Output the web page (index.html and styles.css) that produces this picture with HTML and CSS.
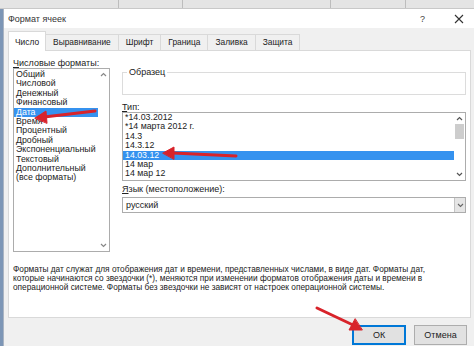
FILE: index.html
```html
<!DOCTYPE html>
<html>
<head>
	<meta charset="utf-8">
	<title>Формат ячеек</title>
	<link rel="stylesheet" href="styles.css">
</head>
<body>
	<div class="ribbon">
		<span class="rib-sep s1"></span>
		<span class="rib-sep s2"></span>
		<span class="rib-sep s3"></span>
		<span class="rib-sep s4"></span>
	</div>
	<div class="page">
		<div class="edge"></div>
		<div class="dialog">
			<div class="titlebar">
				<span class="title">Формат ячеек</span>
				<span class="help">?</span>
				<svg class="close" width="10" height="10" viewBox="0 0 10 10"><path d="M1 1L9 9M9 1L1 9" stroke="#333" stroke-width="1.1"/></svg>
			</div>
			<div class="dlg-body">
				<div class="tabs">
					<div class="tab active">Число</div>
					<div class="tab">Выравнивание</div>
					<div class="tab">Шрифт</div>
					<div class="tab">Граница</div>
					<div class="tab">Заливка</div>
					<div class="tab">Защита</div>
				</div>
				<div class="panel">
					<div class="columns">
						<div class="left-col">
							<div class="label"><u>Ч</u>исловые форматы:</div>
							<div class="listbox formats">
								<div class="items">
									<div>Общий</div>
									<div>Числовой</div>
									<div>Денежный</div>
									<div>Финансовый</div>
									<div class="sel">Дата</div>
									<div>Время</div>
									<div>Процентный</div>
									<div>Дробный</div>
									<div>Экспоненциальный</div>
									<div>Текстовый</div>
									<div>Дополнительный</div>
									<div>(все форматы)</div>
								</div>
								<div class="scroll">
									<svg class="arr" width="7" height="5" viewBox="0 0 7 5"><path d="M1 4L3.5 1.5L6 4" fill="none" stroke="#888" stroke-width="1.2"/></svg>
									<svg class="arr" width="7" height="5" viewBox="0 0 7 5"><path d="M1 1L3.5 3.5L6 1" fill="none" stroke="#888" stroke-width="1.2"/></svg>
								</div>
							</div>
						</div>
						<div class="right-col">
							<fieldset class="sample">
								<legend>Образец</legend>
							</fieldset>
							<div class="label"><u>Т</u>ип:</div>
							<div class="listbox types">
								<div class="items">
									<div>*14.03.2012</div>
									<div>*14 марта 2012 г.</div>
									<div>14.3</div>
									<div>14.3.12</div>
									<div class="sel">14.03.12</div>
									<div>14 мар</div>
									<div>14 мар 12</div>
								</div>
								<div class="scroll">
									<svg class="arr" width="7" height="5" viewBox="0 0 7 5"><path d="M1 4L3.5 1.5L6 4" fill="none" stroke="#555" stroke-width="1.2"/></svg>
									<span class="thumb"></span>
									<svg class="arr" width="7" height="5" viewBox="0 0 7 5"><path d="M1 1L3.5 3.5L6 1" fill="none" stroke="#555" stroke-width="1.2"/></svg>
								</div>
							</div>
							<div class="label lang"><u>Я</u>зык (местоположение):</div>
							<div class="combo">
								<span>русский</span>
								<span class="drop"><svg width="7" height="5" viewBox="0 0 7 5"><path d="M1 1L3.5 3.5L6 1" fill="none" stroke="#666" stroke-width="1.1"/></svg></span>
							</div>
						</div>
					</div>
					<p class="desc">Форматы дат служат для отображения дат и времени, представленных числами, в виде дат. Форматы дат,<br>которые начинаются со звездочки (*), меняются при изменении форматов отображения даты и времени в<br>операционной системе. Форматы без звездочки не зависят от настроек операционной системы.</p>
				</div>
				<div class="buttons">
					<div class="btn default">ОК</div>
					<div class="btn">Отмена</div>
				</div>
			</div>
		</div>
	</div>
	<svg class="arrows" width="474" height="346" viewBox="0 0 474 346">
		<g stroke="#d8232a" stroke-width="3" stroke-linecap="round" fill="#d8232a">
			<line x1="95" y1="111" x2="44" y2="117"/>
			<polygon points="35,118 46,111 47,123" stroke-width="1"/>
			<line x1="236" y1="156" x2="173" y2="153"/>
			<polygon points="163,153 174,147 174,159" stroke-width="1"/>
			<line x1="317" y1="308" x2="353" y2="325"/>
			<polygon points="362,330 349,330 355,319" stroke-width="1"/>
		</g>
	</svg>
</body>
</html>
```

FILE: styles.css
```css
* {
	margin: 0;
	padding: 0;
	box-sizing: border-box;
}

body {
	width: 474px;
	height: 346px;
	overflow: hidden;
	font-family: "Liberation Sans", Arial, sans-serif;
	font-size: 9px;
	color: #222;
	background: #f0f0f0;
	position: relative;
}

.ribbon {
	height: 9px;
	background: #e4e4e4;
	border-bottom: 1px solid #c8c8c8;
	position: relative;
}

.rib-sep {
	position: absolute;
	top: 0;
	width: 1px;
	height: 8px;
	background: #bdbdbd;
}
.s1 { left: 118px; }
.s2 { left: 182px; }
.s3 { left: 330px; }
.s4 { left: 405px; }

.page {
	display: flex;
	height: 337px;
}

.edge {
	width: 3px;
	background: #7d96b6;
}

.dialog {
	flex: 1;
	background: #f0f0f0;
	border-left: 1px solid #aab4c2;
}

.titlebar {
	height: 19px;
	background: #fff;
	display: flex;
	align-items: center;
	padding: 0 0 0 4px;
}

.title {
	flex: 1;
	color: #333;
}

.help {
	width: 10px;
	margin-right: 24px;
	color: #444;
}

.close {
	margin-right: 10px;
}

.dlg-body {
	padding: 3px 3px 0 4px;
}

.tabs {
	display: flex;
	align-items: flex-end;
	height: 19px;
	font-size: 8.4px;
}

.tab {
	height: 16px;
	line-height: 15px;
	padding: 0 7px;
	border: 1px solid #d9d9d9;
	border-bottom: none;
	border-left: none;
	background: #f0f0f0;
	color: #222;
}

.tab.active {
	height: 20px;
	line-height: 21px;
	padding: 0 6px;
	background: #fff;
	border-left: 1px solid #d9d9d9;
	position: relative;
	top: 1px;
}

.panel {
	height: 268px;
	background: #fff;
	border: 1px solid #d9d9d9;
	padding: 7px 4px 0 4px;
	display: flex;
	flex-direction: column;
}

.columns {
	display: flex;
	gap: 12px;
}

.label {
	height: 10px;
	line-height: 10px;
}

.left-col {
	width: 97px;
}

.listbox {
	border: 1px solid #acacac;
	display: flex;
	background: #fff;
}

.formats {
	height: 184px;
}

.items {
	flex: 1;
	padding-top: 1px;
}

.items div {
	height: 9.4px;
	line-height: 9.4px;
	font-size: 8.8px;
	padding-left: 2px;
	white-space: nowrap;
}

.types .items {
	padding-top: 0;
}

.items .sel {
	background: #3592ef;
	color: #fff;
}

.scroll {
	width: 11px;
	display: flex;
	flex-direction: column;
	align-items: center;
	justify-content: space-between;
	padding: 3px 0;
}

.thumb {
	width: 9px;
	height: 15px;
	background: #cdcdcd;
	margin-top: 3px;
	margin-bottom: auto;
}

.right-col {
	flex: 1;
	padding-top: 10px;
}

.sample {
	border: 1px solid #dcdcdc;
	height: 27px;
	padding: 0 4px;
	margin-bottom: 7px;
}

.sample legend {
	padding: 0 2px;
	line-height: 9px;
}

.types {
	height: 69px;
	margin-bottom: 3px;
}

.combo {
	margin-top: 3px;
	height: 16px;
	border: 1px solid #acacac;
	display: flex;
	align-items: center;
	justify-content: space-between;
	padding-left: 3px;
}

.drop {
	width: 11px;
	height: 14px;
	background: #e5e5e5;
	border-left: 1px solid #c4c4c4;
	display: flex;
	align-items: center;
	justify-content: center;
}

.desc {
	margin-top: auto;
	margin-bottom: 25px;
	font-size: 8.3px;
	line-height: 9px;
	white-space: nowrap;
	color: #222;
}

.buttons {
	display: flex;
	justify-content: flex-end;
	gap: 8px;
	padding-top: 7px;
	padding-right: 4px;
}

.btn {
	width: 53px;
	height: 20px;
	line-height: 18px;
	text-align: center;
	background: #e1e1e1;
	border: 1px solid #adadad;
}

.btn.default {
	width: 54px;
	border: 2px solid #0078d7;
	line-height: 16px;
}

.arrows {
	position: absolute;
	left: 0;
	top: 0;
	pointer-events: none;
}
```
